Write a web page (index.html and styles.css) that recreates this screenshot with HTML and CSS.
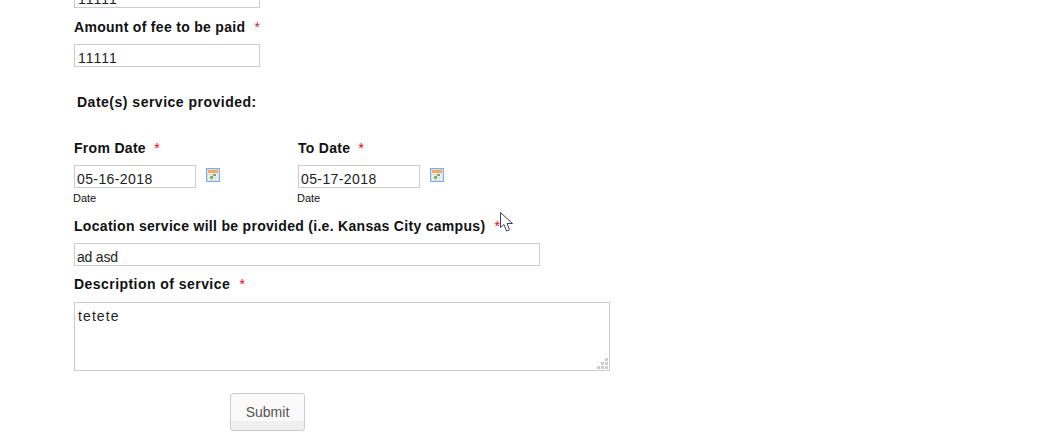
FILE: index.html
```html
<!DOCTYPE html>
<html lang="en">
<head>
    <meta charset="UTF-8">
    <title>Service form</title>
    <link rel="stylesheet" href="styles.css">
</head>
<body>
    <form class="form">
        <input class="field field-short" type="text" value="11111">

        <label class="label label-fee">Amount of fee to be paid <span class="req req-dark">*</span></label>
        <input class="field field-short" type="text" value="11111">

        <h4 class="section-title">Date(s) service provided:</h4>

        <div class="date-row">
            <div class="date-col">
                <label class="label">From Date <span class="req">*</span></label>
                <div class="date-line">
                    <input class="field field-date" type="text" value="05-16-2018">
                    <svg class="cal-icon" width="14" height="14" viewBox="0 0 14 14">
                        <rect x="0.5" y="0.5" width="13" height="13" fill="#cfe0f2" stroke="#86aedb"/>
                        <rect x="2" y="2" width="10" height="3" fill="#f6a660"/>
                        <rect x="2" y="5" width="10" height="7" fill="#f3f4f2"/>
                        <path d="M2 6.5h10M2 9.5h10M4.5 5v7M7 5v7M9.5 5v7" stroke="#d5d8de" stroke-width="0.7" fill="none"/>
                        <rect x="4" y="8" width="3" height="3" fill="#6db56d"/>
                        <rect x="7" y="6" width="3" height="2" fill="#6db56d"/>
                    </svg>
                </div>
                <span class="sublabel">Date</span>
            </div>
            <div class="date-col">
                <label class="label">To Date <span class="req">*</span></label>
                <div class="date-line">
                    <input class="field field-date" type="text" value="05-17-2018">
                    <svg class="cal-icon" width="14" height="14" viewBox="0 0 14 14">
                        <rect x="0.5" y="0.5" width="13" height="13" fill="#cfe0f2" stroke="#86aedb"/>
                        <rect x="2" y="2" width="10" height="3" fill="#f6a660"/>
                        <rect x="2" y="5" width="10" height="7" fill="#f3f4f2"/>
                        <path d="M2 6.5h10M2 9.5h10M4.5 5v7M7 5v7M9.5 5v7" stroke="#d5d8de" stroke-width="0.7" fill="none"/>
                        <rect x="4" y="8" width="3" height="3" fill="#6db56d"/>
                        <rect x="7" y="6" width="3" height="2" fill="#6db56d"/>
                    </svg>
                </div>
                <span class="sublabel">Date</span>
            </div>
        </div>

        <label class="label label-location">Location service will be provided (i.e. Kansas City campus) <span class="req">*</span></label>
        <input class="field field-long" type="text" value="ad asd">

        <label class="label label-desc">Description of service <span class="req">*</span></label>
        <div class="area-wrap">
            <textarea class="field-area">tetete</textarea>
            <svg class="grip" width="12" height="12" viewBox="0 0 12 12">
                <g fill="#ccc">
                    <rect x="9" y="1" width="3" height="3"/>
                    <rect x="5" y="5" width="3" height="3"/>
                    <rect x="9" y="5" width="3" height="3"/>
                    <rect x="1" y="9" width="3" height="3"/>
                    <rect x="5" y="9" width="3" height="3"/>
                    <rect x="9" y="9" width="3" height="3"/>
                </g>
            </svg>
        </div>

        <button class="submit" type="button">Submit</button>
    </form>

    <!-- mouse pointer caught in the screenshot -->
    <svg class="cursor" width="14" height="21" viewBox="0 0 14 21">
        <path d="M0.5 0.5 L0.5 15.5 L4 12.5 L6.5 19 L9.5 17.8 L7 11.5 L12.5 11.5 Z" fill="#fff" stroke="#3c4358"/>
    </svg>
</body>
</html>
```

FILE: styles.css
```css
* {
    margin: 0;
    padding: 0;
    box-sizing: border-box;
}

html, body {
    height: 100%;
    overflow: hidden;
    background: #fff;
}

body {
    font-family: "Liberation Sans", Arial, sans-serif;
    color: #111;
    position: relative;
}

.form {
    display: flex;
    flex-direction: column;
    align-items: flex-start;
    margin-top: -15px;
    padding-left: 74px;
}

/* labels */
.label {
    display: block;
    font-size: 14px;
    line-height: 16px;
    font-weight: bold;
    letter-spacing: 0.3px;
}

.label-fee {
    margin-top: 11px;
    margin-bottom: 9px;
}

.label-location {
    margin-top: 13px;
    margin-bottom: 9px;
}

.label-desc {
    margin-top: 10px;
    margin-bottom: 10px;
    letter-spacing: 0.45px;
}

.req {
    color: #f00000;
    font-weight: normal;
    margin-left: 5px;
}

.req-dark {
    color: #a33;
}

.section-title {
    font-size: 14px;
    line-height: 16px;
    letter-spacing: 0.5px;
    margin: 27px 0 0 3px;
}

/* inputs */
.field {
    display: block;
    height: 23px;
    border: 1px solid #ccc;
    padding: 4px 2px 0;
    font-family: "Liberation Sans", Arial, sans-serif;
    font-size: 14px;
    line-height: 18px;
    letter-spacing: 0.4px;
    color: #222;
    background: #fff;
    outline: none;
}

.field-short {
    width: 186px;
    padding-left: 3px;
    letter-spacing: 1px;
}

.field-date {
    width: 122px;
}

.field-long {
    width: 466px;
    letter-spacing: -0.2px;
}

/* date columns */
.date-row {
    display: flex;
    margin-top: 30px;
}

.date-col {
    width: 224px;
}

.date-col .label {
    margin-bottom: 9px;
}

.date-col .req {
    margin-left: 4px;
}

.date-line {
    display: flex;
    align-items: flex-start;
    gap: 10px;
}

.cal-icon {
    margin-top: 3px;
}

.sublabel {
    display: block;
    font-size: 11px;
    line-height: 13px;
    margin-top: 4px;
    margin-left: -1px;
}

/* description */
.area-wrap {
    position: relative;
    width: 536px;
    height: 69px;
}

.field-area {
    display: block;
    width: 100%;
    height: 100%;
    border: 1px solid #ccc;
    padding: 4px 3px;
    font-family: "Liberation Sans", Arial, sans-serif;
    font-size: 14px;
    line-height: 18px;
    letter-spacing: 1.1px;
    color: #222;
    resize: none;
    outline: none;
}

.grip {
    position: absolute;
    right: 2px;
    bottom: 2px;
}

.submit {
    width: 75px;
    height: 38px;
    margin: 22px 0 0 156px;
    border: 1px solid #ccc;
    border-radius: 3px;
    background: linear-gradient(#fafafa 0, #fafafa 75%, #f0f0f0 75%);
    font-family: "Liberation Sans", Arial, sans-serif;
    font-size: 14px;
    color: #555;
}

.cursor {
    position: absolute;
    left: 500px;
    top: 212px;
}
```
